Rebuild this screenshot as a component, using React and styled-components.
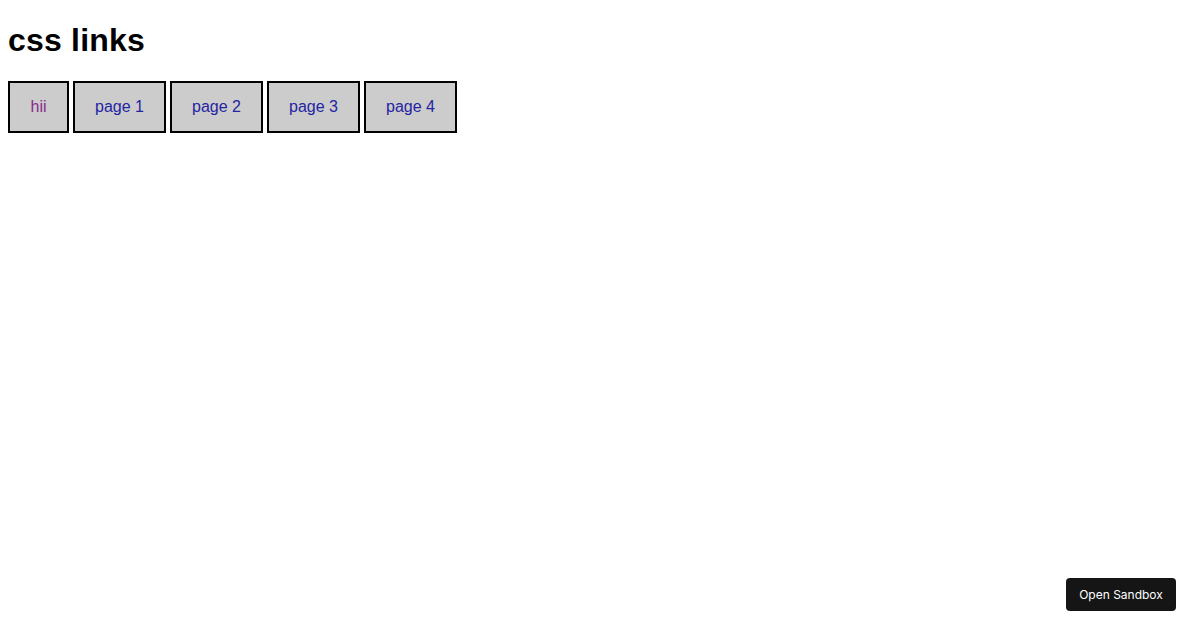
import React from 'react';
import styled, { createGlobalStyle } from 'styled-components';

const GlobalStyle = createGlobalStyle`
    body {
        margin: 8px;
        font-family: "Liberation Sans", Arial, sans-serif;
        background: #fff;
    }
`;

const Title = styled.h1`
    font-size: 32px;
    font-weight: bold;
    letter-spacing: 0.2px;
    margin: 14.44px 0 21.44px;
    color: #000;
`;

const Nav = styled.nav`
    display: block;
    font-size: 16px;
    word-spacing: -0.4px;
`;

const NavLink = styled.a`
    display: inline-block;
    padding: ${props => (props.$visited ? '15px 20.5px' : '15px 20px')};
    border: 2px solid #000;
    background-color: #cccccc;
    font-size: 16px;
    word-spacing: normal;
    text-decoration: none;
    color: ${props => (props.$visited ? '#8a2a8a' : '#2424a2')};
`;

const SandboxButton = styled.button`
    position: fixed;
    right: 24px;
    bottom: 19px;
    height: 33px;
    width: 110px;
    border: none;
    border-radius: 4px;
    background: #151515;
    color: #fff;
    font-family: Inter, "Liberation Sans", sans-serif;
    font-size: 12px;
    cursor: pointer;
`;

const links = [
    { label: 'hii', visited: true },
    { label: 'page 1' },
    { label: 'page 2' },
    { label: 'page 3' },
    { label: 'page 4' },
];

const App = () => {
    return (
        <>
            <GlobalStyle />
            <Title>css links</Title>
            <Nav>
                {links.map(link => (
                    <React.Fragment key={link.label}>
                        <NavLink href="#" $visited={link.visited}>
                            {link.label}
                        </NavLink>{' '}
                    </React.Fragment>
                ))}
            </Nav>
            <SandboxButton>Open Sandbox</SandboxButton>
        </>
    );
};

export default App;
